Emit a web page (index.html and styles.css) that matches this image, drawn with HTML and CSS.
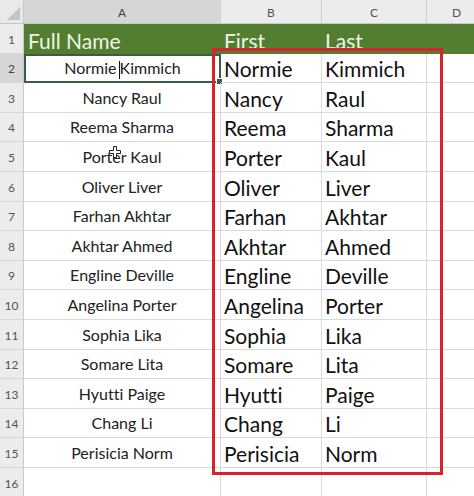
FILE: index.html
```html
<!DOCTYPE html>
<html>
<head>
<meta charset="utf-8">
<link rel="stylesheet" href="styles.css">
</head>
<body>
<div class="sheet">
  <div class="grid">
    <div class="corner"><span class="tri"></span></div>
    <div class="colh sel">A</div>
    <div class="colh">B</div>
    <div class="colh">C</div>
    <div class="colh">D</div>

    <div class="rowh">1</div>
    <div class="hd a">Full Name</div>
    <div class="hd">First</div>
    <div class="hd">Last</div>
    <div class="hd"></div>

    <div class="rowh sel">2</div>
    <div class="c a active">Normie<span class="caret"></span> Kimmich<span class="handle"></span></div>
    <div class="c big">Normie</div>
    <div class="c big">Kimmich</div>
    <div class="c"></div>

    <div class="rowh">3</div>
    <div class="c a">Nancy Raul</div>
    <div class="c big">Nancy</div>
    <div class="c big">Raul</div>
    <div class="c"></div>

    <div class="rowh">4</div>
    <div class="c a">Reema Sharma</div>
    <div class="c big">Reema</div>
    <div class="c big">Sharma</div>
    <div class="c"></div>

    <div class="rowh">5</div>
    <div class="c a">Porter Kaul</div>
    <div class="c big">Porter</div>
    <div class="c big">Kaul</div>
    <div class="c"></div>

    <div class="rowh">6</div>
    <div class="c a">Oliver Liver</div>
    <div class="c big">Oliver</div>
    <div class="c big">Liver</div>
    <div class="c"></div>

    <div class="rowh">7</div>
    <div class="c a">Farhan Akhtar</div>
    <div class="c big">Farhan</div>
    <div class="c big">Akhtar</div>
    <div class="c"></div>

    <div class="rowh">8</div>
    <div class="c a">Akhtar Ahmed</div>
    <div class="c big">Akhtar</div>
    <div class="c big">Ahmed</div>
    <div class="c"></div>

    <div class="rowh">9</div>
    <div class="c a">Engline Deville</div>
    <div class="c big">Engline</div>
    <div class="c big">Deville</div>
    <div class="c"></div>

    <div class="rowh">10</div>
    <div class="c a">Angelina Porter</div>
    <div class="c big">Angelina</div>
    <div class="c big">Porter</div>
    <div class="c"></div>

    <div class="rowh">11</div>
    <div class="c a">Sophia Lika</div>
    <div class="c big">Sophia</div>
    <div class="c big">Lika</div>
    <div class="c"></div>

    <div class="rowh">12</div>
    <div class="c a">Somare Lita</div>
    <div class="c big">Somare</div>
    <div class="c big">Lita</div>
    <div class="c"></div>

    <div class="rowh">13</div>
    <div class="c a">Hyutti Paige</div>
    <div class="c big">Hyutti</div>
    <div class="c big">Paige</div>
    <div class="c"></div>

    <div class="rowh">14</div>
    <div class="c a">Chang Li</div>
    <div class="c big">Chang</div>
    <div class="c big">Li</div>
    <div class="c"></div>

    <div class="rowh">15</div>
    <div class="c a">Perisicia Norm</div>
    <div class="c big">Perisicia</div>
    <div class="c big">Norm</div>
    <div class="c"></div>

    <div class="rowh">16</div>
    <div class="c"></div>
    <div class="c"></div>
    <div class="c"></div>
    <div class="c"></div>
  </div>
  <div class="redbox"></div>
  <svg class="cross" width="12" height="12" viewBox="0 0 12 12">
    <path d="M4.5 0.5h3v4h4v3h-4v4h-3v-4h-4v-3h4z" fill="#fff" stroke="#222" stroke-width="1"/>
  </svg>
</div>
</body>
</html>
```

FILE: styles.css
```css
html, body {
  margin: 0;
  padding: 0;
  background: #fff;
  overflow: hidden;
}
.sheet {
  position: relative;
  width: 474px;
  height: 496px;
  overflow: hidden;
  font-family: Lato, "Open Sans", sans-serif;
  font-variant-ligatures: none;
}
.grid {
  display: grid;
  grid-template-columns: 24px 197px 101px 105px 60px;
  grid-template-rows: 24px repeat(16, 29.6px);
}
.grid > div {
  box-sizing: border-box;
}
.corner {
  background: #e9e9e9;
  border-right: 1px solid #c8c8c8;
  border-bottom: 1px solid #c8c8c8;
  position: relative;
}
.tri {
  position: absolute;
  right: 3px;
  bottom: 3px;
  width: 0;
  height: 0;
  border-left: 13px solid transparent;
  border-bottom: 13px solid #c4c4c4;
}
.colh {
  background: #ececec;
  border-right: 1px solid #d0d0d0;
  border-bottom: 1px solid #c8c8c8;
  color: #555;
  font-size: 12px;
  display: flex;
  align-items: center;
  justify-content: center;
  padding-top: 2px;
}
.colh.sel {
  background: #d6d6d6;
  color: #444;
}
.rowh {
  background: #ececec;
  border-right: 1px solid #c8c8c8;
  border-bottom: 1px solid #d6d6d6;
  color: #555;
  font-size: 12px;
  display: flex;
  align-items: flex-end;
  justify-content: center;
  padding-bottom: 6px;
}
.rowh.sel {
  background: #d6d6d6;
  color: #444;
}
.hd {
  background: #537d30;
  color: #eef5e6;
  font-size: 21px;
  display: flex;
  align-items: flex-end;
  padding: 0 0 1px 3px;
  white-space: nowrap;
}
.hd.a {
  padding-left: 4px;
}
.c {
  border-right: 1px solid #dadada;
  border-bottom: 1px solid #dadada;
  display: flex;
  align-items: flex-end;
  padding: 0 0 4px 3px;
  color: #1a1a1a;
  white-space: nowrap;
  position: relative;
}
.c.a {
  justify-content: center;
  font-size: 16px;
  padding: 0 0 5px 0;
  color: #222;
}
.c.big {
  font-size: 21px;
  padding-bottom: 1px;
  color: #111;
}
.active {
  border: 2px solid #3b5e3f !important;
  padding-bottom: 4px !important;
}
.caret {
  display: inline-block;
  width: 1px;
  height: 18px;
  background: #111;
  margin-left: 2px;
  margin-bottom: -2px;
}
.handle {
  position: absolute;
  right: -4px;
  bottom: -4px;
  width: 5px;
  height: 5px;
  background: #3b5e3f;
  border: 1px solid #fff;
}
.redbox {
  position: absolute;
  left: 212px;
  top: 48px;
  width: 231px;
  height: 427px;
  box-sizing: border-box;
  border: 3px solid #d8232e;
}
.cross {
  position: absolute;
  left: 109px;
  top: 146px;
}
```
